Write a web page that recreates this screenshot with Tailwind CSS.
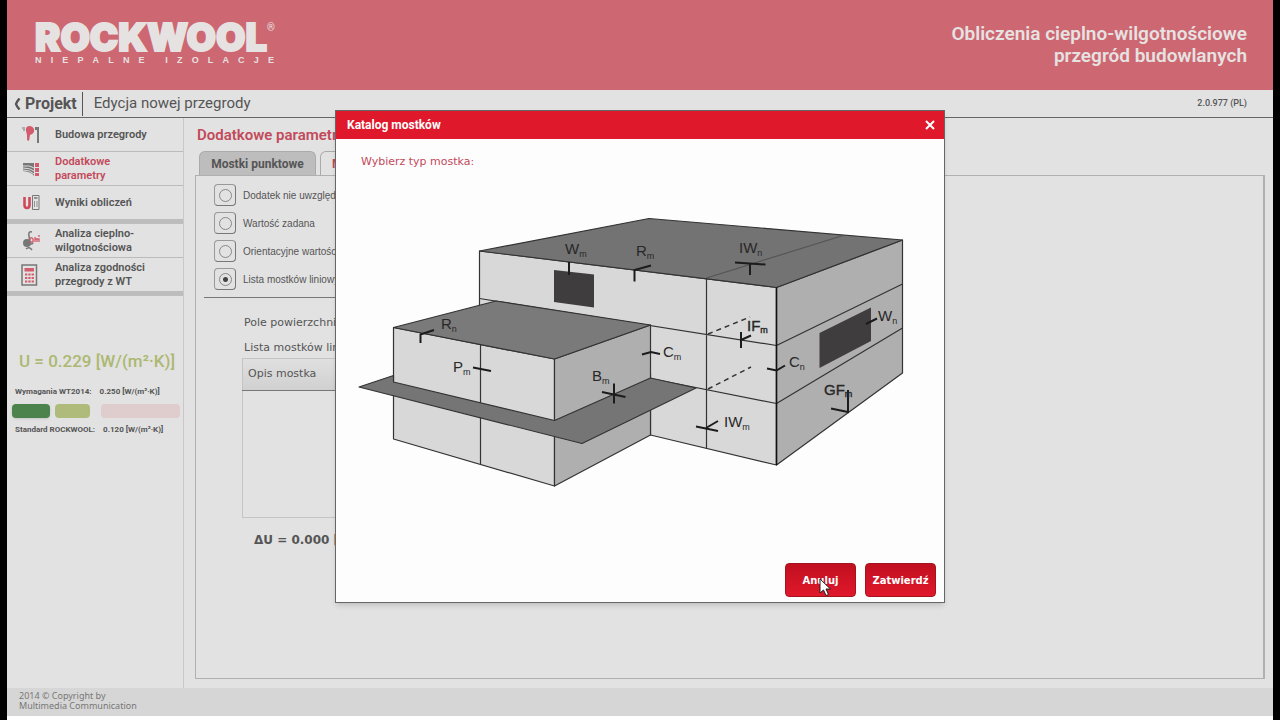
<!DOCTYPE html>
<html lang="pl">
<head>
<meta charset="utf-8">
<title>Rockwool – Katalog mostków</title>
<script src="https://cdn.jsdelivr.net/npm/@tailwindcss/browser@4"></script>
</head>
<body class="bg-black font-['Roboto',sans-serif] text-[#555]">
<div class="mx-[7px] flex min-h-screen flex-col border-b-4 border-white bg-[#e2e2e2]">
  <header class="flex h-[90px] items-start justify-between bg-[#cd6771] pr-[26px] pl-[28px] text-[#e6e2e2]">
    <div class="pt-[19px]" aria-label="Rockwool">
      <div class="flex items-start">
        <span class="font-['Inter',sans-serif] text-[38px] leading-[37px] font-black [-webkit-text-stroke:2px_#e6e2e2]">ROCKWOOL</span>
        <span class="pt-[4px] text-[10px] leading-[10px]">®</span>
      </div>
      <div class="flex w-[239px] justify-between font-['Liberation_Sans',sans-serif] text-[9px] leading-[8px] font-bold"><span>N</span><span>I</span><span>E</span><span>P</span><span>A</span><span>L</span><span>N</span><span>E</span><span>&nbsp;</span><span>I</span><span>Z</span><span>O</span><span>L</span><span>A</span><span>C</span><span>J</span><span>E</span></div>
    </div>
    <h1 class="pt-[23px] text-right text-[19px] leading-[22px] font-semibold">Obliczenia cieplno-wilgotnościowe<br>przegród budowlanych</h1>
  </header>

  <div class="flex h-7 items-center border-b border-[#666] pr-[26px] pl-[7px]">
    <a href="#" class="flex items-center gap-1 text-[16px] font-bold">
      <svg class="h-3 w-[7px]" viewBox="0 0 7 12" fill="none" stroke="#555" stroke-width="2.4"><path d="M5.500 .5Q2.500 4 2 6Q2.500 8 5.500 11.500"/></svg>Projekt</a>
    <span class="ml-[5px] h-6 w-px bg-[#555]"></span>
    <span class="ml-[11px] flex-1 text-[15px]">Edycja nowej przegrody</span>
    <span class="text-[9px] font-medium">2.0.977 (PL)</span>
  </div>

  <div class="flex flex-1">
    <aside class="w-[177px] shrink-0 border-r border-[#c8c8c8]">
      <nav class="text-[11px] leading-[14px] font-semibold">
        <a href="#" class="flex h-[34px] items-center gap-[14px] border-b border-[#bbb] pl-[14px]">
          <svg class="size-5" viewBox="0 0 20 20"><path d="M5 6Q4 1 9 1Q14 2 13 7Q11 10 9 10L8 16L6 15L6 10Z" fill="#d35b6b"/><path d="M1 3H4M2 5H4" stroke="#777"/><path d="M14 2H18V18H16V5H14Z" fill="#777"/></svg>
          <span>Budowa przegrody</span></a>
        <a href="#" class="flex h-[34px] items-center gap-[14px] border-b border-[#bbb] pl-[14px] text-[#c24a5b]">
          <svg class="size-5" viewBox="0 0 20 20"><path d="M2 4H13V17Q11 13 2 12Z" fill="#777"/><path d="M2 7Q9 6 13 9M2 9Q9 9 13 12M2 11Q9 11 13 15" fill="none" stroke="#ddd"/><path d="M14 4H18V8H14ZM14 9H18V13H14ZM14 14H18V17H14Z" fill="#d35b6b"/></svg>
          <span>Dodatkowe<br>parametry</span></a>
        <a href="#" class="flex h-[33px] items-center gap-[14px] pl-[14px]">
          <svg class="size-5" viewBox="0 0 20 20" fill="none"><path d="M3.500 4V12Q3.500 15 6 15Q8.500 15 8.500 12V4" stroke="#d0485b" stroke-width="2.600"/><path d="M11.500 2.500H18V16.500H11.500Z" stroke="#777"/><path d="M13 5H16.500M13 9H14M15.500 9H16.500M13 11H14M15.500 11H16.500M13 13H14M15.500 13H16.500" stroke="#777" stroke-width="1.500"/></svg>
          <span>Wyniki obliczeń</span></a>
        <div class="h-[5px] bg-[#bdbdbd]"></div>
        <a href="#" class="flex h-[34px] items-center gap-[14px] border-b border-[#bbb] pl-[14px]">
          <svg class="size-5" viewBox="0 0 20 20"><circle cx="6" cy="12" r="4" fill="#777"/><path d="M11 1Q7 0 8 5L9 12Q11 14 12 12M5 18Q8 15 11 19" fill="none" stroke="#777" stroke-width="1.500"/><path d="M9 9Q9 5 12 8V11H9M14 6V11M14 8H18V11M16 8V11M18 4V6" fill="none" stroke="#d35b6b" stroke-width="1.300"/></svg>
          <span>Analiza cieplno-<br>wilgotnościowa</span></a>
        <a href="#" class="flex h-[33px] items-center gap-[14px] pl-[14px]">
          <svg class="h-[22px] w-5" viewBox="0 0 20 22"><path d="M1 1H15.500V21H1Z" fill="none" stroke="#777" stroke-width="1.500"/><path d="M3.500 4H13V7.500H3.500Z" fill="#d35b6b"/><path d="M4 10.500H13M4 14H13M4 17.500H13" stroke="#d35b6b" stroke-width="2.200" stroke-dasharray="2.300 1"/></svg>
          <span>Analiza zgodności<br>przegrody z WT</span></a>
        <div class="h-[5px] bg-[#bdbdbd]"></div>
      </nav>
      <section class="pt-[54px]">
        <p class="pl-3 text-[17px] leading-[22px] font-medium whitespace-nowrap text-[#adb871]">U = 0.229 [W/(m²·K)]</p>
        <p class="mt-[14px] flex gap-2 pl-2 text-[8px] leading-3 font-bold whitespace-nowrap"><span>Wymagania WT2014:</span><span>0.250 [W/(m²·K)]</span></p>
        <div class="mt-[6px] flex pl-[5px]">
          <span class="h-[14px] w-[38px] rounded bg-[#4c824b] shadow-sm"></span>
          <span class="ml-[5px] h-[14px] w-[35px] rounded bg-[#aebb7a]"></span>
          <span class="ml-[11px] h-[14px] w-[79px] rounded bg-[#dfcccd]"></span>
        </div>
        <p class="mt-[6px] flex gap-2 pl-2 text-[8px] leading-3 font-bold whitespace-nowrap"><span>Standard ROCKWOOL:</span><span>0.120 [W/(m²·K)]</span></p>
      </section>
    </aside>

    <main class="flex min-w-0 flex-1 flex-col pt-[7px] pr-2 pb-[9px] pl-[11px]">
      <h2 class="pl-[2px] text-[15px] leading-5 font-semibold text-[#c24a5b]">Dodatkowe parametry</h2>
      <div class="mt-[6px] flex gap-1 pl-1 text-[12px] font-bold">
        <button class="h-6 w-[117px] rounded-t-md border border-b-0 border-[#aaa] bg-[#bdbdbd]">Mostki punktowe</button>
        <button class="-mb-px h-[25px] w-[117px] rounded-t-md border border-b-0 border-[#aaa] bg-[#e2e2e2] pl-[11px] text-left text-[#c24a5b]">Mostki liniowe</button>
      </div>
      <section class="flex-1 border border-r-2 border-[#b0b0b0]">
        <div class="ml-2 flex w-[560px] flex-col gap-[6px] border-b border-[#777] pt-[8px] pb-[7px] pl-[10px] font-['Liberation_Sans',sans-serif] text-[10px]">
          <label class="flex h-[22px] items-center gap-[7px]"><span class="flex size-[22px] items-center justify-center rounded-sm border border-[#999] border-r-[#777] border-b-[#777]"><input type="radio" name="typ" class="size-[13px] appearance-none rounded-full border border-[#888]"></span>Dodatek nie uwzględniony</label>
          <label class="flex h-[22px] items-center gap-[7px]"><span class="flex size-[22px] items-center justify-center rounded-sm border border-[#999] border-r-[#777] border-b-[#777]"><input type="radio" name="typ" class="size-[13px] appearance-none rounded-full border border-[#888]"></span>Wartość zadana</label>
          <label class="flex h-[22px] items-center gap-[7px]"><span class="flex size-[22px] items-center justify-center rounded-sm border border-[#999] border-r-[#777] border-b-[#777]"><input type="radio" name="typ" class="size-[13px] appearance-none rounded-full border border-[#888]"></span>Orientacyjne wartości</label>
          <label class="flex h-[22px] items-center gap-[7px]"><span class="flex size-[22px] items-center justify-center rounded-sm border border-[#999] border-r-[#777] border-b-[#777]"><input type="radio" name="typ" checked class="size-[13px] appearance-none rounded-full border border-[#888] bg-[radial-gradient(circle,#444_2px,transparent_3px)]"></span>Lista mostków liniowych</label>
        </div>
        <div class="pl-[46px] font-['DejaVu_Sans',sans-serif] text-[11px]">
          <p class="mt-[17px] pl-[2px] leading-4">Pole powierzchnii</p>
          <p class="mt-[9px] pl-[2px] leading-4">Lista mostków liniowych</p>
          <table class="mt-[2px] h-[160px] w-[500px] border border-[#c4c4c4]">
            <thead><tr class="h-8 border-b border-[#777] bg-linear-to-b from-[#e0e0e0] to-[#d0d0d0]"><th class="pl-[5px] text-left font-normal">Opis mostka</th></tr></thead>
            <tbody><tr><td></td></tr></tbody>
          </table>
          <p class="mt-[14px] pl-[12px] text-[12px] leading-4 font-bold">ΔU = 0.000 [W/(m²·K)]</p>
        </div>
      </section>
    </main>
  </div>

  <footer class="h-7 bg-[#d6d6d6] pt-[3px] pl-3 font-['Noto_Sans',sans-serif] text-[9px] leading-[10px] text-[#777]">2014 © Copyright by<br>Multimedia Communication</footer>
</div>

<div class="absolute inset-x-0 top-[110px] flex justify-center">
  <div role="dialog" aria-labelledby="dlg" class="flex w-[610px] flex-col border border-[#666] bg-[#fdfdfd] shadow-md">
    <div class="flex h-7 items-center justify-between bg-[#e0182b] pr-2 pl-[11px] text-white">
      <h2 id="dlg" class="text-[12px] font-bold">Katalog mostków</h2>
      <button aria-label="Zamknij" class="flex size-3 items-center justify-center"><svg class="size-[10px]" viewBox="0 0 10 10" stroke="#fff" stroke-width="2"><path d="M1 1L9 9M9 1L1 9"/></svg></button>
    </div>
    <p class="pt-[15px] pl-[25px] font-['DejaVu_Sans',sans-serif] text-[11px] leading-4 text-[#c24a5b]">Wybierz typ mostka:</p>
    <svg class="mt-[35px] ml-[14px] h-[290px] w-[560px]" viewBox="350 205 560 290" role="img" aria-label="Schemat budynku z mostkami" stroke-linejoin="round">
      <g stroke="#333" stroke-width="1.200">
        <path fill="#d8d8d8" d="M479.500 251L776.500 287.500V465L650.500 435V374L479.500 310Z"/>
        <path fill="#afafaf" d="M776.500 287.500L902.500 240V373L776.500 465Z"/>
        <path fill="#737373" d="M479.500 251L649 218.500L902.500 240L776.500 287.500Z"/>
        <path fill="none" d="M706.500 278L843 235.500" stroke="#555"/>
        <path fill="none" d="M479.500 298.500L776.500 345.500L902.500 284M650.500 378.500L776.500 403.500L902.500 328M706.500 278V449"/>
        <path fill="none" d="M776.500 287.500V465" stroke="#111" stroke-width="1.500"/>
        <path fill="#d8d8d8" d="M393.500 327.500L554.500 359V486L393.500 439Z"/>
        <path fill="#afafaf" d="M554.500 359L650.500 325V435L554.500 486Z"/>
        <path fill="#7a7a7a" d="M393.500 327.500L496 301L650.500 325L554.500 359Z"/>
        <path fill="none" d="M480.500 345V464"/>
        <path fill="#757575" d="M359 387L393.500 375.500V382L554.500 420.500L650.500 378L696 388L582 443.500Z"/>
      </g>
      <path fill="#403d3e" d="M554 270L594 274.500V307.500L554 302ZM819.500 333L871 307.500V341L819.500 368Z"/>
      <path fill="none" stroke="#333" stroke-width="1.500" stroke-dasharray="5 4" d="M708 334L750 317M708 389L751 367"/>
      <path fill="none" stroke="#1c1c1c" stroke-width="2" stroke-linejoin="miter" d="M569 262V275M634.500 281.500V270L651 265.500M735 262.500L765.500 264.500M750 263.500V275M420.500 343V334.500L434 330M473 367.500L491 371M602 392L625.500 397M614 383.500V403.500M642 354.500L651 352L660 354M741 332V348M741 340L751 335.500M866 324L877 318.500M767 368.500L776.500 370.500L785 365.500M696 426.500L718 431M706 428L718 421M848 390V412L831 408.500"/>
      <g fill="#282828" font-family="Liberation Sans, sans-serif" font-size="15">
        <text x="565" y="254">W<tspan font-size="9" dy="3">m</tspan></text>
        <text x="636" y="256">R<tspan font-size="9" dy="3">m</tspan></text>
        <text x="739" y="253">IW<tspan font-size="9" dy="3">n</tspan></text>
        <text x="441" y="329">R<tspan font-size="9" dy="3">n</tspan></text>
        <text x="453" y="372">P<tspan font-size="9" dy="3">m</tspan></text>
        <text x="592" y="381">B<tspan font-size="9" dy="3">m</tspan></text>
        <text x="663" y="357">C<tspan font-size="9" dy="3">m</tspan></text>
        <text x="747" y="331" stroke="#282828" stroke-width=".4">IF<tspan font-size="9" dy="2">m</tspan></text>
        <text x="878" y="321">W<tspan font-size="9" dy="3">n</tspan></text>
        <text x="789" y="367">C<tspan font-size="9" dy="3">n</tspan></text>
        <text x="724" y="427">IW<tspan font-size="9" dy="3">m</tspan></text>
        <text x="824" y="395" stroke="#282828" stroke-width=".4">GF<tspan font-size="9" dy="2">m</tspan></text>
      </g>
    </svg>
    <div class="mt-[68px] mr-2 mb-[5px] flex justify-end gap-[9px] font-['DejaVu_Sans',sans-serif] text-[10px] font-bold text-white">
      <button class="relative h-[34px] w-[71px] rounded-sm border border-[#a3141f] bg-linear-to-b from-[#c01020] to-[#e0182b]">Anuluj
        <svg class="absolute top-[14px] left-[33px] h-[19px] w-3" viewBox="0 0 12 19"><path d="M1 1V15L4.500 12L7 17.500L9.500 16.500L7 11H11.500Z" fill="#fff" stroke="#222"/></svg>
      </button>
      <button class="h-[34px] w-[71px] rounded-sm border border-[#a3141f] bg-linear-to-b from-[#c01020] to-[#e0182b]">Zatwierdź</button>
    </div>
  </div>
</div>
</body>
</html>
